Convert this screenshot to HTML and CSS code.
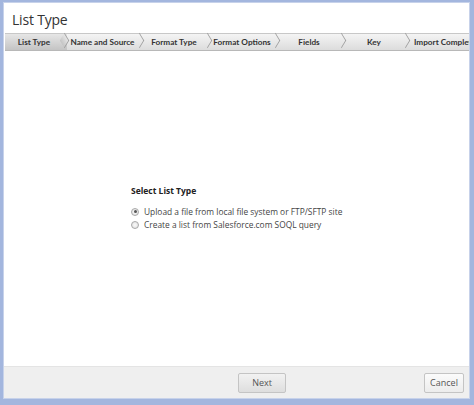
FILE: index.html
```html
<!DOCTYPE html>
<html>
<head>
<meta charset="utf-8">
<link rel="stylesheet" href="styles.css">
</head>
<body>
<div class="dialog">
  <h1 class="title">List Type</h1>
  <ol class="steps">
    <li class="step active" style="width:62px">List Type</li>
    <li class="step" style="width:75px">Name and Source</li>
    <li class="step" style="width:68px">Format Type</li>
    <li class="step" style="width:68px">Format Options</li>
    <li class="step" style="width:66px">Fields</li>
    <li class="step" style="width:64px">Key</li>
    <li class="step last">Import Complete</li>
  </ol>
  <div class="body">
    <div class="form">
      <div class="form-title">Select List Type</div>
      <label class="option"><span class="radio checked"></span>Upload a file from local file system or FTP/SFTP site</label>
      <label class="option"><span class="radio"></span>Create a list from Salesforce.com SOQL query</label>
    </div>
  </div>
  <div class="footer">
    <button class="btn next">Next</button>
    <button class="btn cancel">Cancel</button>
  </div>
</div>
</body>
</html>
```
FILE: styles.css
```css
html, body {
  margin: 0;
  padding: 0;
}
body {
  width: 474px;
  height: 405px;
  background: #a3b6de;
  font-family: "Open Sans", "DejaVu Sans", sans-serif;
  padding: 3px 5px 7px 4px;
  box-sizing: border-box;
}
.dialog {
  height: 100%;
  background: #fff;
  display: flex;
  flex-direction: column;
  box-shadow: 0 0 0 1px #c7d2ea;
  overflow: hidden;
}
.title {
  margin: 0;
  padding: 8px 0 0 8px;
  height: 22px;
  font-size: 14px;
  font-weight: 400;
  color: #333;
  line-height: 18px;
  letter-spacing: -0.2px;
}
.steps {
  list-style: none;
  margin: 0 0 0 1px;
  padding: 0;
  display: flex;
  height: 16px;
  background: linear-gradient(#f4f4f4, #dcdcdc);
  border-top: 1px solid #c8c8c8;
  border-bottom: 1px solid #b8b8b8;
  white-space: nowrap;
}
.step {
  position: relative;
  flex: none;
  font-family: Lato, "Open Sans", sans-serif;
  font-size: 8.2px;
  font-weight: 700;
  color: #333;
  line-height: 16px;
  text-align: center;
  padding-right: 4px;
  box-sizing: border-box;
}
.step.active {
  background: linear-gradient(#e6e6e6, #c4c4c4);
}
.step::after {
  content: "";
  position: absolute;
  right: -3px;
  top: 1px;
  width: 10px;
  height: 10px;
  border-top: 1px solid #9a9a9a;
  border-right: 1px solid #9a9a9a;
  transform: scaleX(0.6) rotate(45deg);
  background: inherit;
  z-index: 1;
}
.step.last {
  flex: 1;
  text-align: left;
  padding-left: 6px;
  overflow: hidden;
}
.step.last::after {
  display: none;
}
.body {
  flex: 1;
  position: relative;
}
.form {
  padding: 134px 0 0 127px;
}
.form-title {
  font-size: 8.5px;
  font-weight: 700;
  color: #222;
  margin-bottom: 9px;
}
.option {
  display: flex;
  align-items: center;
  font-size: 8.4px;
  color: #444;
  line-height: 13px;
}
.radio {
  width: 6px;
  height: 6px;
  border: 1px solid #a8a8a8;
  border-radius: 50%;
  background: radial-gradient(#fafafa, #dedede);
  margin-right: 5px;
  position: relative;
}
.radio.checked::after {
  content: "";
  position: absolute;
  left: 1.5px;
  top: 1.5px;
  width: 3px;
  height: 3px;
  border-radius: 50%;
  background: #555;
}
.footer {
  height: 31px;
  background: #efefef;
  border-top: 1px solid #e4e4e4;
  position: relative;
  display: flex;
  align-items: center;
}
.btn {
  font-family: "Open Sans", "DejaVu Sans", sans-serif;
  font-size: 9px;
  color: #555;
  height: 20px;
  border: 1px solid #c4c4c4;
  border-radius: 2px;
  background: linear-gradient(#f2f2f2, #dedede);
  padding: 0;
}
.btn.next {
  width: 48px;
  margin-left: 234px;
}
.btn.cancel {
  width: 40px;
  margin-left: auto;
  margin-right: 5px;
  background: linear-gradient(#fbfbfb, #ececec);
}
```
